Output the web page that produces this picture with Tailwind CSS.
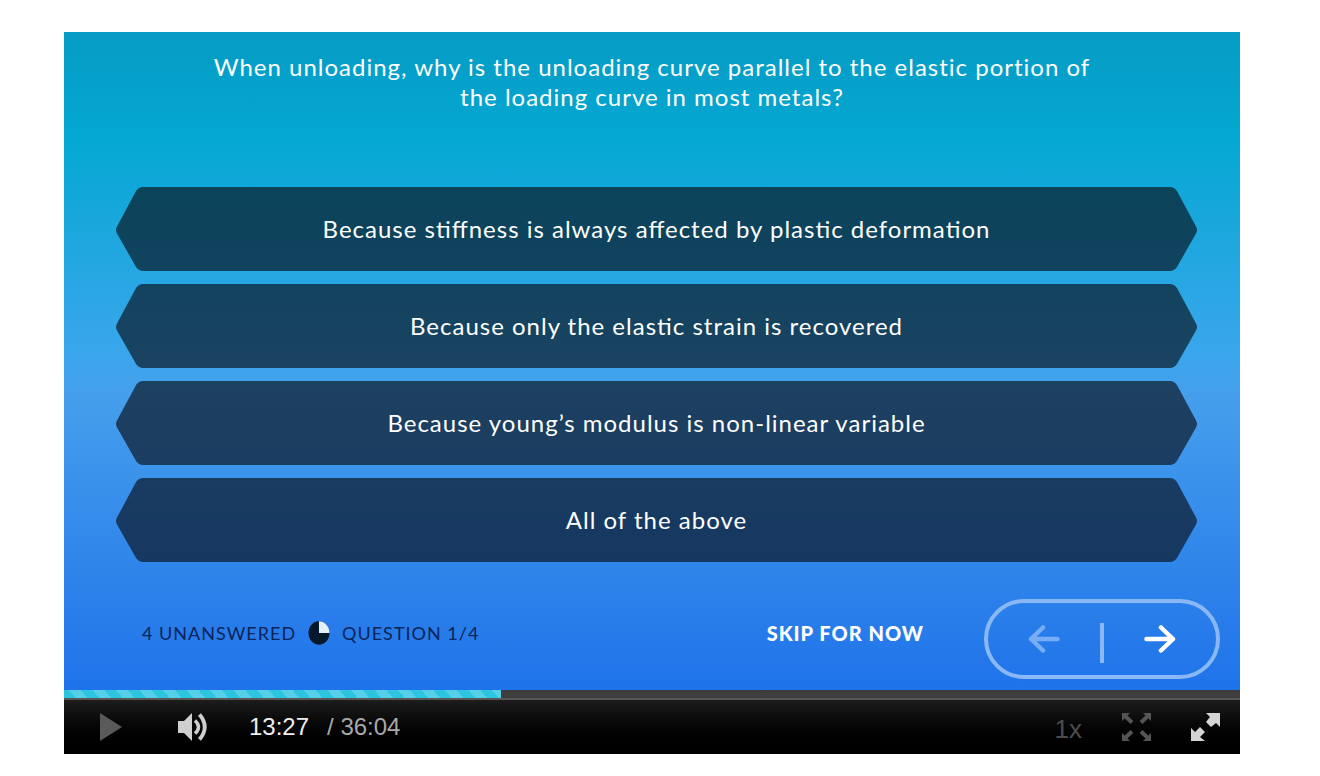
<!DOCTYPE html>
<html lang="en">
<head>
    <meta charset="UTF-8">
    <meta name="viewport" content="width=device-width, initial-scale=1.0">
    <title>Video Quiz</title>
    <script src="https://cdn.jsdelivr.net/npm/@tailwindcss/browser@4"></script>
</head>
<body class="bg-white font-[Lato,sans-serif]">

    <!-- Shared shapes -->
    <svg class="hidden">
        <symbol id="cap" viewBox="0 0 28 84" preserveAspectRatio="none">
            <path d="M28 0 C23.500 0 21.500 1.500 19.500 5 L1 39.500 Q-1 43 1 46.500 L19.500 79 C21.500 82.500 23.500 84 28 84 Z"/>
        </symbol>
    </svg>

    <main class="mt-8 ml-16 mr-20">
        <!-- Quiz -->
        <section class="flex flex-col bg-linear-[180deg,#069bc4_0%,#04a8d2_16%,#3aa6ec_49%,#469fec_55%,#2f84ea_82%,#1f73ea_100%] pb-[11px] text-white tracking-[1px]">
            <h1 class="mx-auto mt-5 h-[135px] max-w-[900px] text-center text-2xl leading-[30px]">When unloading, why is the unloading curve parallel to the elastic portion of the loading curve in most metals?</h1>

            <div class="ml-[52px] mr-[43px] grid gap-[13px] text-2xl text-[#080e17]/65 [font-feature-settings:'liga']">
                <button type="button" class="flex h-[84px] cursor-pointer">
                    <svg class="w-7 h-full shrink-0 fill-current"><use href="#cap"/></svg>
                    <span class="flex-1 h-full flex items-center justify-center bg-current"><span class="text-white">Because stiffness is always affected by plastic deformation</span></span>
                    <svg class="w-7 h-full shrink-0 fill-current -scale-x-100"><use href="#cap"/></svg>
                </button>
                <button type="button" class="flex h-[84px] cursor-pointer">
                    <svg class="w-7 h-full shrink-0 fill-current"><use href="#cap"/></svg>
                    <span class="flex-1 h-full flex items-center justify-center bg-current"><span class="text-white">Because only the elastic strain is recovered</span></span>
                    <svg class="w-7 h-full shrink-0 fill-current -scale-x-100"><use href="#cap"/></svg>
                </button>
                <button type="button" class="flex h-[84px] cursor-pointer">
                    <svg class="w-7 h-full shrink-0 fill-current"><use href="#cap"/></svg>
                    <span class="flex-1 h-full flex items-center justify-center bg-current"><span class="text-white">Because young’s modulus is non-linear variable</span></span>
                    <svg class="w-7 h-full shrink-0 fill-current -scale-x-100"><use href="#cap"/></svg>
                </button>
                <button type="button" class="flex h-[84px] cursor-pointer">
                    <svg class="w-7 h-full shrink-0 fill-current"><use href="#cap"/></svg>
                    <span class="flex-1 h-full flex items-center justify-center bg-current"><span class="text-white">All of the above</span></span>
                    <svg class="w-7 h-full shrink-0 fill-current -scale-x-100"><use href="#cap"/></svg>
                </button>
            </div>

            <!-- Status and navigation -->
            <div class="mt-[37px] ml-[78px] mr-5 flex">
                <div class="mt-5 h-7 flex items-center text-lg text-[#0a2458]">
                    <span>4 UNANSWERED</span>
                    <svg class="w-[22px] h-6 mx-3" viewBox="0 0 22 24">
                        <ellipse cx="11" cy="12" rx="10.500" ry="11.700" fill="#06182c"/>
                        <path d="M11 12 V.300 A10.500 11.700 0 0 1 21.500 12 Z" fill="#e4effd"/>
                    </svg>
                    <span>QUESTION 1/4</span>
                </div>
                <button type="button" class="ml-auto mr-[60px] mt-5 h-7 text-xl font-black cursor-pointer">SKIP FOR NOW</button>
                <div class="flex items-center w-[236px] h-20 rounded-full border-4 border-[#8ab8f6]">
                    <button type="button" aria-label="Previous question" class="flex-1 flex justify-center text-[#78adf5]" disabled>
                        <svg class="w-8 h-8" viewBox="0 0 32 32" fill="none" stroke="currentColor" stroke-width="4.500" stroke-linecap="round" stroke-linejoin="round"><path d="M29.500 16 H3 M15 4.500 L3 16 L15 27.500"/></svg>
                    </button>
                    <span class="w-1 h-10 mt-2 bg-[#8ab8f6]"></span>
                    <button type="button" aria-label="Next question" class="flex-1 flex justify-center cursor-pointer">
                        <svg class="w-8 h-8" viewBox="0 0 32 32" fill="none" stroke="currentColor" stroke-width="4.500" stroke-linecap="round" stroke-linejoin="round"><path d="M2.500 16 H29 M17 4.500 L29 16 L17 27.500"/></svg>
                    </button>
                </div>
            </div>
        </section>

        <!-- Progress -->
        <div class="h-2 bg-[#3e3e3e]">
            <div class="h-full bg-[repeating-linear-gradient(50deg,#2cc5e0_0px,#2cc5e0_9px,#55d0e8_9px,#55d0e8_18px)]" style="width: 37.2%"></div>
        </div>

        <!-- Player controls -->
        <div class="flex items-center h-14 px-5 border-t-2 border-[#565656] bg-linear-to-b from-[#1d1d1d] to-black font-['Liberation_Sans',sans-serif] text-2xl text-[#a8a8a8]">
            <button type="button" aria-label="Play" class="ml-4 cursor-pointer">
                <svg class="w-[22px] h-7" viewBox="0 0 22 28"><path d="M0 0 L22 14 L0 28 Z" fill="#5a5a5a"/></svg>
            </button>
            <button type="button" aria-label="Mute" class="ml-14 cursor-pointer">
                <svg class="w-[30px] h-7" viewBox="0 0 30 28" fill="none" stroke="#cfcfcf">
                    <path d="M0 8 H6 L14 0 V28 L6 20 H0 Z" fill="#cfcfcf" stroke="none"/>
                    <path d="M17 7.500 Q24 14 17 20.500" stroke-width="3.500"/>
                    <path d="M21.500 1.500 Q32 14 21.500 26.500" stroke-width="3.800"/>
                </svg>
            </button>
            <span class="ml-[41px] text-[#eeeeee]">13:27</span>
            <span class="ml-[18px]">/ 36:04</span>

            <button type="button" class="ml-auto mt-1 text-[26px] text-[#4c4c4c] cursor-pointer">1x</button>
            <button type="button" aria-label="Theater mode" class="ml-10 cursor-pointer">
                <svg class="w-[29px] h-7" viewBox="0 0 29 28" fill="#555555" stroke="#555555">
                    <path d="M0 0 H8 L0 8 Z M29 0 H21 L29 8 Z M0 28 H8 L0 20 Z M29 28 H21 L29 20 Z" stroke="none"/>
                    <path d="M3 3 L10 9.500 M26 3 L19 9.500 M3 25 L10 18.500 M26 25 L19 18.500" stroke-width="4"/>
                </svg>
            </button>
            <button type="button" aria-label="Full screen" class="ml-10 cursor-pointer">
                <svg class="w-[29px] h-7" viewBox="0 0 29 28" fill="#d4d4d4">
                    <path d="M15 0 H29 V14 L25 10 L20 14 L15 9 L19 4 Z M0 15 L4 19 L9 14 L14 19 L9 24 L14 28 H0 Z"/>
                </svg>
            </button>
        </div>
    </main>

</body>
</html>
